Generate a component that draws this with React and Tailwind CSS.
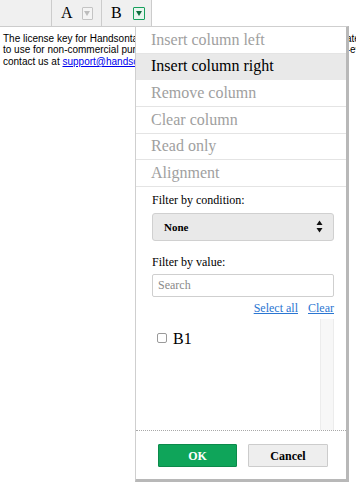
import React from "react";

const serif = "font-['Liberation_Serif','Times_New_Roman',serif]";

function Tri({ color, w = 6, h = 5 }) {
  return (
    <svg width={w} height={h} viewBox="0 0 6 5">
      <path d="M0 0 L6 0 L3 5 Z" fill={color} />
    </svg>
  );
}

function HeaderButton({ active }) {
  return active ? (
    <div className="w-[12px] h-[13px] border-[1.5px] border-[#17a05d] bg-[#e8f5ee] rounded-[1px] flex items-center justify-center">
      <Tri color="#0c6e3d" />
    </div>
  ) : (
    <div className="w-[11px] h-[13px] border border-[#c4c4c4] bg-[#f4f4f4] rounded-[1px] flex items-center justify-center">
      <Tri color="#bdbdbd" />
    </div>
  );
}

const items = [
  { label: "Insert column left", disabled: true },
  { label: "Insert column right", active: true },
  { label: "Remove column", disabled: true },
  { label: "Clear column", disabled: true },
  { label: "Read only", disabled: true },
  { label: "Alignment", disabled: true },
];

export default function App() {
  return (
    <div className="relative w-[356px] h-[483px] overflow-hidden bg-white">
      {/* Table header */}
      <div className={`flex h-[27px] ${serif}`}>
        <div className="w-[52px] h-[27px] bg-[#f0f0f0] border-r border-b border-[#cccccc]" />
        <div className="w-[50px] h-[27px] bg-[#f0f0f0] border-r border-b border-[#cccccc] flex items-center pl-[9px] gap-[9px]">
          <span className="text-[16px] text-black leading-none">A</span>
          <HeaderButton />
        </div>
        <div className="w-[50px] h-[27px] bg-[#f0f0f0] border-r border-b border-[#cccccc] flex items-center pl-[9px] gap-[11px]">
          <span className="text-[16px] text-black leading-none">B</span>
          <HeaderButton active />
        </div>
      </div>

      {/* License notice */}
      <div className="mt-[6px] pl-[3px] font-['Liberation_Sans',Arial,sans-serif] text-[10px] leading-[11.4px] text-black whitespace-nowrap">
        <div>The license key for Handsontable is missing. Use your purchased key to activate the product. Alternatively, you can activate Handsontable</div>
        <div>to use for non-commercial purposes by passing the key: 'non-commercial-and-evaluation'. If you need any help,</div>
        <div>
          contact us at{" "}
          <a className="text-[#0000ee] underline">support@handsontable.com</a>.
        </div>
      </div>

      {/* Dropdown menu */}
      <div
        className={`absolute left-[135px] top-[26px] w-[214px] h-[456px] bg-white border-l border-t border-[#cfcfcf] border-r-[3px] border-b-[3px] border-r-[#b8b8b8] border-b-[#b8b8b8] flex flex-col ${serif}`}
      >
        {items.map((it) => (
          <div
            key={it.label}
            className={`h-[26.67px] shrink-0 flex items-center pl-[15px] text-[16px] leading-none border-b ${
              it.active ? "bg-[#e9e9e9] text-black border-[#e9e9e9]" : "text-[#a0a0a0] border-[#e4e4e4]"
            }`}
          >
            {it.label}
          </div>
        ))}

        <div className="pl-[16px] pr-[12px] flex flex-col flex-1 min-h-0">
          <div className="mt-[6px] text-[12px] leading-[14px] text-black">Filter by condition:</div>
          <div className="mt-[6px] h-[28px] bg-[#e9e9e9] border border-[#d0d0d0] rounded-[3px] flex items-center justify-between pl-[11px] pr-[10px]">
            <span className="text-[11px] font-bold text-black">None</span>
            <svg width="7" height="13" viewBox="0 0 7 13">
              <path d="M0.5 5 L6.5 5 L3.5 0.5 Z" fill="#111" />
              <path d="M0.5 8 L6.5 8 L3.5 12.5 Z" fill="#111" />
            </svg>
          </div>
          <div className="mt-[14px] text-[12px] leading-[14px] text-black">Filter by value:</div>
          <div className="mt-[5px] h-[23px] border border-[#cfcfcf] rounded-[2px] flex items-center pl-[5px]">
            <span className="text-[12px] text-[#8a8a8a]">Search</span>
          </div>
          <div className="mt-[4px] flex justify-end gap-[10px] text-[12px] leading-[14px]">
            <a className="text-[#2a76d2] underline">Select all</a>
            <a className="text-[#2a76d2] underline">Clear</a>
          </div>
          <div className="mt-[4px] flex-1 flex min-h-0">
            <div className="flex-1 flex items-start pt-[11px] pl-[5px]">
              <span className="mt-[3px] w-[10px] h-[10px] border border-[#9a9a9a] rounded-[2px] bg-white" />
              <span className="ml-[6px] text-[16px] leading-[18px] text-black">B1</span>
            </div>
            <div className="w-[14px] bg-[#f7f7f7] border-l border-r border-[#ececec]" />
          </div>
        </div>

        <div className="border-t border-dotted border-[#a8a8a8] h-[49px] shrink-0 flex items-start pt-[13px] pl-[22px] gap-[11px]">
          <div className="w-[79px] h-[23px] bg-[#0fa55a] border border-[#0c8a4b] rounded-[1px] flex items-center justify-center text-white font-bold text-[12px]">
            OK
          </div>
          <div className="w-[80px] h-[23px] bg-[#eeeeee] border border-[#cccccc] rounded-[1px] flex items-center justify-center text-black font-bold text-[12px]">
            Cancel
          </div>
        </div>
      </div>
    </div>
  );
}
